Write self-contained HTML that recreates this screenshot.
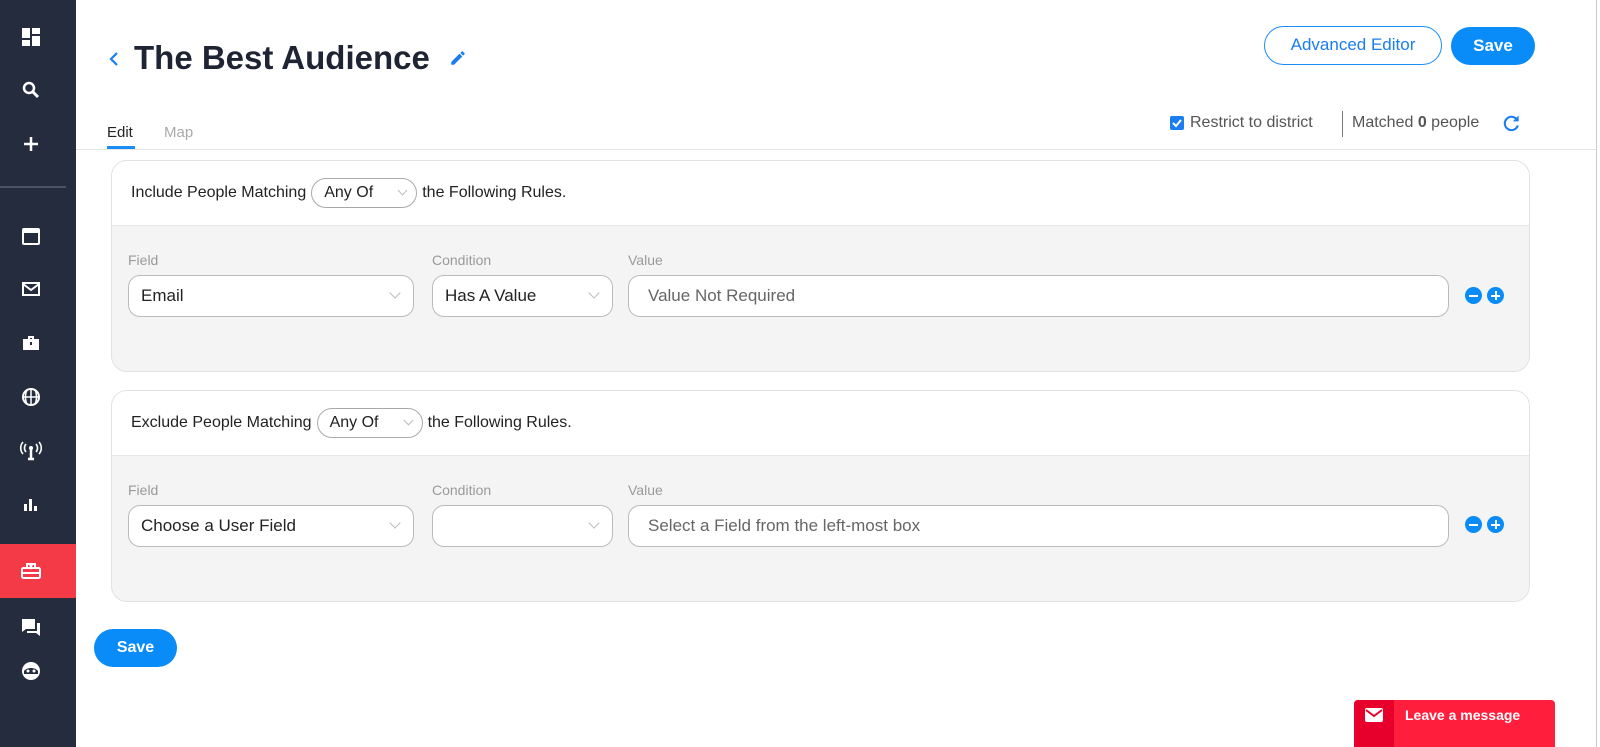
<!DOCTYPE html>
<html><head><meta charset="utf-8"><style>
*{box-sizing:border-box;margin:0;padding:0}
body{width:1600px;height:747px;overflow:hidden;background:#fff;font-family:"Liberation Sans",sans-serif;position:relative;color:#222}
.sb{position:absolute;left:0;top:0;width:76px;height:747px;background:#242c3e}
.ic{position:absolute;left:19px;width:24px;height:24px}
.abs{position:absolute}
.card{position:absolute;left:111px;width:1419px;border:1px solid #e2e2e2;border-radius:16px;overflow:hidden;background:#f4f4f4}
.card .hd{height:65px;background:#fff;border-bottom:1px solid #e6e6e6;font-size:16px;padding-left:19px;display:flex;align-items:center;color:#222}
.pill{display:inline-block;border:1px solid #aaa;border-radius:15px;height:30px;line-height:28px;padding:0 12px;margin:0 5px;width:106px;position:relative;font-size:16px}
.lbl{position:absolute;font-size:14px;color:#9a9a9a}
.sel{position:absolute;height:42px;border:1px solid #bbb;border-radius:12px;background:#fff;font-size:17px;line-height:40px;padding-left:12px;color:#222}
.chev{position:absolute;right:14px;top:13px;width:8px;height:8px;border-right:1.5px solid #bbb;border-bottom:1.5px solid #bbb;transform:rotate(45deg)}
.btn{position:absolute;background:#0a8cf8;color:#fff;font-weight:bold;border-radius:20px;text-align:center}
.circ{position:absolute;width:17px;height:17px;border-radius:50%;background:#0a8cf8}
</style></head><body>
<div class="sb">
 <svg class="ic" style="top:25px" viewBox="0 0 24 24"><path fill="#fff" d="M3 3h8v10H3zM13 3h8v6h-8zM3 15h8v6H3zM13 11h8v10h-8z"/></svg>
 <svg class="ic" style="top:78px" viewBox="0 0 24 24"><circle cx="10" cy="10" r="5" stroke="#fff" stroke-width="2.5" fill="none"/><path d="M14 14l5 5" stroke="#fff" stroke-width="3"/></svg>
 <svg class="ic" style="top:132px" viewBox="0 0 24 24"><path d="M12 5v14M5 12h14" stroke="#fff" stroke-width="2.5"/></svg>
 <div class="abs" style="left:0;top:186px;width:66px;height:2px;background:#4a5264"></div>
 <svg class="ic" style="top:224px" viewBox="0 0 24 24"><rect x="4" y="5" width="16" height="15" rx="1" stroke="#fff" stroke-width="2" fill="none"/><path d="M4 5h16v4H4z" fill="#fff"/></svg>
 <svg class="ic" style="top:277px" viewBox="0 0 24 24"><rect x="4" y="6" width="16" height="12" stroke="#fff" stroke-width="2" fill="none"/><path d="M4 7l8 6 8-6" stroke="#fff" stroke-width="2" fill="none"/></svg>
 <svg class="ic" style="top:331px" viewBox="0 0 24 24"><path fill="#fff" d="M4 8h16v11H4zM9 8V5h6v3h-2V7h-2v1z"/><rect x="11" y="11" width="2" height="3" fill="#242c3e"/></svg>
 <svg class="ic" style="top:385px" viewBox="0 0 24 24"><circle cx="12" cy="12" r="8" stroke="#fff" stroke-width="2" fill="none"/><path d="M4 12h16M12 4v16M8 5c-2 4-2 10 0 14M16 5c2 4 2 10 0 14" stroke="#fff" stroke-width="1.5" fill="none"/></svg>
 <svg class="ic" style="top:439px" viewBox="0 0 24 24"><circle cx="12" cy="9" r="2" fill="#fff"/><path d="M12 10v10M9 20h6" stroke="#fff" stroke-width="2.5"/><path d="M7 5a6 6 0 000 8M17 5a6 6 0 010 8M4 3a9 9 0 000 12M20 3a9 9 0 010 12" stroke="#fff" stroke-width="1.6" fill="none"/></svg>
 <svg class="ic" style="top:492px" viewBox="0 0 24 24"><path fill="#fff" d="M5 12h3v7H5zM10 7h3v12h-3zM15 14h3v5h-3z"/></svg>
 <div class="abs" style="left:0;top:544px;width:76px;height:54px;background:#f43a46"></div>
 <svg class="ic" style="top:559px" viewBox="0 0 24 24"><rect x="3" y="9" width="18" height="10" rx="1.5" stroke="#fff" stroke-width="2" fill="none"/><path d="M3 14h18M8 9V5h8v4M11 5l1 3 1-3" stroke="#fff" stroke-width="2" fill="none"/></svg>
 <svg class="ic" style="top:616px" viewBox="0 0 24 24"><path fill="#fff" d="M3 3h13v10H7l-4 3zM18 7h3v13l-4-3H8v-2h10z"/></svg>
 <svg class="ic" style="top:659px" viewBox="0 0 24 24"><circle cx="12" cy="12" r="9" fill="#fff"/><path d="M5 12c3-4 11-4 14 0v3H5z" fill="#242c3e"/><circle cx="9" cy="12" r="1.5" fill="#fff"/><circle cx="15" cy="12" r="1.5" fill="#fff"/></svg>
</div>
<div class="abs" style="left:1596px;top:0;width:1px;height:747px;background:#ccc"></div>

<svg class="abs" style="left:108px;top:51px" width="12" height="16" viewBox="0 0 12 16"><path d="M9 2L3 8l6 6" stroke="#1a7df0" stroke-width="2.2" fill="none"/></svg>
<div class="abs" style="left:134px;top:39px;font-size:33px;font-weight:600;color:#1e2433">The Best Audience</div>
<svg class="abs" style="left:449px;top:49px" width="18" height="18" viewBox="0 0 24 24"><path fill="#1a7df0" d="M3 17.25V21h3.75L17.8 9.94l-3.75-3.75zM20.7 7.04a1 1 0 000-1.41l-2.34-2.34a1 1 0 00-1.41 0l-1.83 1.83 3.75 3.75z"/></svg>

<div class="abs" style="left:1264px;top:26px;width:178px;height:39px;border:1.5px solid #1a8cf8;border-radius:20px;color:#1a7df0;font-size:17px;text-align:center;line-height:36px">Advanced Editor</div>
<div class="btn" style="left:1451px;top:27px;width:84px;height:38px;line-height:38px;font-size:17px">Save</div>

<div class="abs" style="left:107px;top:124px;font-size:15px;color:#222">Edit</div>
<div class="abs" style="left:107px;top:146px;width:28px;height:3px;background:#1a8cf8"></div>
<div class="abs" style="left:164px;top:124px;font-size:15px;color:#aaa">Map</div>
<div class="abs" style="left:76px;top:149px;width:1520px;height:1px;background:#e4e4e4"></div>

<div class="abs" style="left:1170px;top:116px;width:14px;height:14px;background:#1a7df0;border-radius:2px"></div>
<svg class="abs" style="left:1171px;top:117px" width="12" height="12" viewBox="0 0 12 12"><path d="M2 6l3 3 5-6" stroke="#fff" stroke-width="2" fill="none"/></svg>
<div class="abs" style="left:1190px;top:114px;font-size:16px;color:#555">Restrict to district</div>
<div class="abs" style="left:1342px;top:111px;width:1px;height:26px;background:#777"></div>
<div class="abs" style="left:1352px;top:114px;font-size:16px;color:#555">Matched <b>0</b> people</div>
<svg class="abs" style="left:1502px;top:113px" width="20" height="20" viewBox="0 0 24 24"><path d="M18 8a8 8 0 101 7" stroke="#1a7df0" stroke-width="2.5" fill="none"/><path d="M20 3v7h-7z" fill="#1a7df0"/></svg>

<div class="card" style="top:160px;height:212px">
 <div class="hd">Include People Matching <span class="pill">Any Of<span class="chev" style="top:8px;right:10px;width:7px;height:7px"></span></span> the Following Rules.</div>
 <div class="lbl" style="left:16px;top:91px">Field</div>
 <div class="lbl" style="left:320px;top:91px">Condition</div>
 <div class="lbl" style="left:516px;top:91px">Value</div>
 <div class="sel" style="left:16px;top:114px;width:286px">Email<span class="chev"></span></div>
 <div class="sel" style="left:320px;top:114px;width:181px">Has A Value<span class="chev"></span></div>
 <div class="sel" style="left:516px;top:114px;width:821px;color:#666;padding-left:19px">Value Not Required</div>
</div>
<div class="circ" style="left:1465px;top:287px"><div class="abs" style="left:4px;top:7.5px;width:9px;height:2px;background:#fff"></div></div>
<div class="circ" style="left:1487px;top:287px"><div class="abs" style="left:4px;top:7.5px;width:9px;height:2px;background:#fff"></div><div class="abs" style="left:7.5px;top:4px;width:2px;height:9px;background:#fff"></div></div>

<div class="card" style="top:390px;height:212px">
 <div class="hd">Exclude People Matching <span class="pill">Any Of<span class="chev" style="top:8px;right:10px;width:7px;height:7px"></span></span> the Following Rules.</div>
 <div class="lbl" style="left:16px;top:91px">Field</div>
 <div class="lbl" style="left:320px;top:91px">Condition</div>
 <div class="lbl" style="left:516px;top:91px">Value</div>
 <div class="sel" style="left:16px;top:114px;width:286px">Choose a User Field<span class="chev"></span></div>
 <div class="sel" style="left:320px;top:114px;width:181px"><span class="chev"></span></div>
 <div class="sel" style="left:516px;top:114px;width:821px;color:#666;padding-left:19px">Select a Field from the left-most box</div>
</div>
<div class="circ" style="left:1465px;top:516px"><div class="abs" style="left:4px;top:7.5px;width:9px;height:2px;background:#fff"></div></div>
<div class="circ" style="left:1487px;top:516px"><div class="abs" style="left:4px;top:7.5px;width:9px;height:2px;background:#fff"></div><div class="abs" style="left:7.5px;top:4px;width:2px;height:9px;background:#fff"></div></div>

<div class="btn" style="left:94px;top:629px;width:83px;height:38px;line-height:38px;font-size:16px">Save</div>

<div class="abs" style="left:1354px;top:700px;width:201px;height:47px;background:#ff1f3d;border-radius:4px 4px 0 0"></div>
<div class="abs" style="left:1354px;top:700px;width:40px;height:47px;background:#e8002c;border-radius:4px 0 0 0"></div>
<svg class="abs" style="left:1365px;top:708px" width="18" height="14" viewBox="0 0 18 14"><rect width="18" height="14" rx="2" fill="#fff"/><path d="M1 2l8 6 8-6" stroke="#e8002c" stroke-width="2" fill="none"/></svg>
<div class="abs" style="left:1405px;top:707px;font-size:14px;font-weight:bold;color:#fff">Leave a message</div>
</body></html>
